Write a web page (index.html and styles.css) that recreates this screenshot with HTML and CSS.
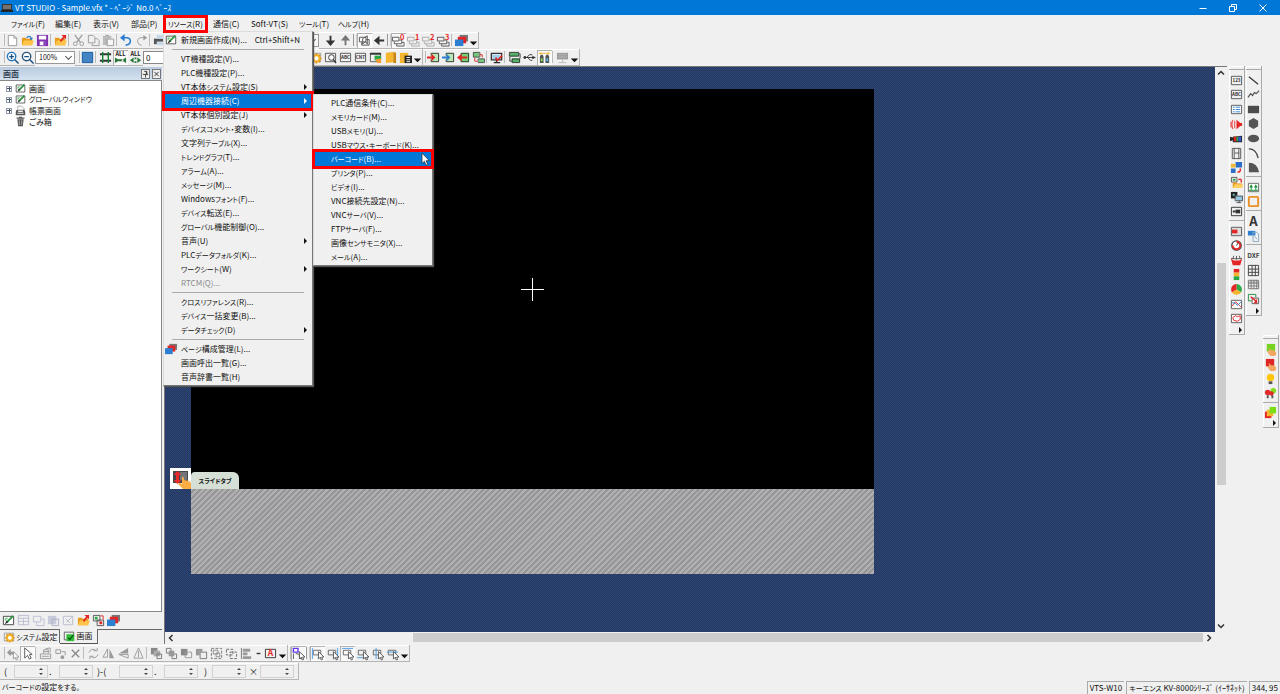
FILE: index.html
```html
<!DOCTYPE html>
<html lang="ja">
<head>
<meta charset="utf-8">
<title>VT STUDIO - Sample.vfx</title>
<link rel="stylesheet" href="styles.css">
</head>
<body>
<header class="titlebar">
  <svg class="app-icon" viewBox="0 0 12 10"><path fill="#343638" d="M1 1h10v7H1z"/><path fill="#77706c" d="M2 2h8v4H2z"/><path fill="#222" d="M0 7h12v2H0z"/></svg>
  <span class="title">VT STUDIO - Sample.vfx * - ﾍﾟｰｼﾞ No.0 ﾍﾞｰｽ</span>
  <div class="window-buttons">
    <button aria-label="最小化"><svg viewBox="0 0 10 10"><path stroke="#fff" d="M1.500 5.500h7"/></svg></button>
    <button aria-label="元に戻す"><svg viewBox="0 0 10 10"><path fill="none" stroke="#fff" d="M1.500 3.500h5v5h-5zM3.500 3V1.500h5v5H7"/></svg></button>
    <button aria-label="閉じる"><svg viewBox="0 0 10 10"><path stroke="#fff" d="M1.500 1.500l7 7M8.500 1.500l-7 7"/></svg></button>
  </div>
</header>

<nav class="menubar">
  <button><span class="kana">ファイル</span>(F)</button>
  <button>編集(E)</button>
  <button>表示(V)</button>
  <button>部品(P)</button>
  <div class="menu-root">
    <button class="marked"><span class="kana">リソース</span>(R)</button>
    <div class="menu resource-menu">
      <button class="item"><svg class="menu-icon"><use href="#i-screen"/></svg>新規画面作成(N)...<span class="shortcut">Ctrl+Shift+N</span></button>
      <hr>
      <button class="item">VT機種設定(V)...</button>
      <button class="item">PLC機種設定(P)...</button>
      <button class="item sub">VT本体<span class="kana">システム</span>設定(S)</button>
      <button class="item sub selected">周辺機器接続(C)</button>
      <button class="item sub">VT本体個別設定(J)</button>
      <button class="item"><span class="kana">デバイスコメント・</span>変数(I)...</button>
      <button class="item">文字列<span class="kana">テーブル</span>(X)...</button>
      <button class="item"><span class="kana">トレンドグラフ</span>(T)...</button>
      <button class="item"><span class="kana">アラーム</span>(A)...</button>
      <button class="item"><span class="kana">メッセージ</span>(M)...</button>
      <button class="item">Windows<span class="kana">フォント</span>(F)...</button>
      <button class="item"><span class="kana">デバイス</span>転送(E)...</button>
      <button class="item"><span class="kana">グローバル</span>機能制御(O)...</button>
      <button class="item sub">音声(U)</button>
      <button class="item">PLC<span class="kana">データフォルダ</span>(K)...</button>
      <button class="item sub"><span class="kana">ワークシート</span>(W)</button>
      <button class="item" disabled>RTCM(Q)...</button>
      <hr>
      <button class="item"><span class="kana">クロスリファレンス</span>(R)...</button>
      <button class="item"><span class="kana">デバイス</span>一括変更(B)...</button>
      <button class="item sub"><span class="kana">データチェック</span>(D)</button>
      <hr>
      <button class="item"><svg class="menu-icon"><use href="#i-pages"/></svg><span class="kana">ページ</span>構成管理(L)...</button>
      <button class="item">画面呼出一覧(G)...</button>
      <button class="item">音声辞書一覧(H)</button>
    </div>
    <div class="menu device-menu">
      <button class="item">PLC通信条件(C)...</button>
      <button class="item"><span class="kana">メモリカード</span>(M)...</button>
      <button class="item">USB<span class="kana">メモリ</span>(U)...</button>
      <button class="item">USB<span class="kana">マウス・キーボード</span>(K)...</button>
      <button class="item selected"><span class="kana">バーコード</span>(B)...</button>
      <button class="item"><span class="kana">プリンタ</span>(P)...</button>
      <button class="item"><span class="kana">ビデオ</span>(I)...</button>
      <button class="item">VNC接続先設定(N)...</button>
      <button class="item">VNC<span class="kana">サーバ</span>(V)...</button>
      <button class="item">FTP<span class="kana">サーバ</span>(F)...</button>
      <button class="item">画像<span class="kana">センサモニタ</span>(X)...</button>
      <button class="item"><span class="kana">メール</span>(A)...</button>
      <svg class="cursor" viewBox="0 0 9 14"><path fill="#fff" stroke="#222" stroke-width=".7" d="M1 1v10.500l2.400-2.200 1.700 3.900 1.700-.8-1.700-3.700h3.200z"/></svg>
    </div>
  </div>
  <button>通信(C)</button>
  <button>Soft-VT(S)</button>
  <button><span class="kana">ツール</span>(T)</button>
  <button><span class="kana">ヘルプ</span>(H)</button>
</nav>

<div class="toolbar-row">
  <div class="bar" data-icons="new open save | export | cut copy paste | undo redo | print"></div>
  <div class="page-pickers"><span class="picker"><select aria-label="ページ"><option></option></select></span></div>
  <div class="bar joined" data-icons="down up || overlap* left || over0* over1 over2 over3 | pages more"></div>
</div>
<div class="toolbar-row">
  <div class="bar open" data-icons="zoomin zoomout"></div>
  <span class="picker zoom"><select aria-label="表示倍率"><option>100%</option></select></span>
  <div class="bar open" data-icons="bluebox | fit fitall* outall"></div>
  <input class="number-box" aria-label="番号" value="0">
  <div class="bar" data-icons="gear find abc cnt touch book bookcalc more"></div>
  <div class="bar second" data-icons="inred inblue outred swap | monitor | transfer usb people* | server more"></div>
</div>

<main class="main">
  <aside class="side">
    <div class="pane-title"><b>画面</b><button aria-label="固定"><svg viewBox="0 0 8 8"><path fill="none" stroke="#333" d="M2.500 1h3v3.500M1 4.500h6M4 5v3M5 1v3"/></svg></button><button aria-label="閉じる"><svg viewBox="0 0 8 8"><path stroke="#222" d="M1.500 1.500l5 5M6.500 1.500l-5 5"/></svg></button></div>
    <ul class="tree">
      <li><i class="plus"></i><svg><use href="#i-screen"/></svg><span class="current">画面</span></li>
      <li><i class="plus"></i><svg><use href="#i-screen"/></svg><span class="kana">グローバルウィンドウ</span></li>
      <li><i class="plus"></i><svg><use href="#i-report"/></svg><span>帳票画面</span></li>
      <li><i></i><svg><use href="#i-trash"/></svg><span>ごみ箱</span></li>
    </ul>
    <div class="bar open side-tools" data-icons="screen table copyoff pasteoff editoff export swappage pages"></div>
    <div class="tabs">
      <button><svg><use href="#i-gear"/></svg><span><span class="kana">システム</span>設定</span></button>
      <button class="active"><svg><use href="#i-check"/></svg>画面</button>
    </div>
  </aside>

  <section class="workspace">
    <div class="canvas">
      <div class="screen">
        <svg class="crosshair" viewBox="0 0 24 24"><path stroke="#fff" d="M11.500 1v23M0 12.500h23"/></svg>
      </div>
      <div class="slide-area"></div>
      <div class="slide-tab">スライドタブ</div>
      <svg class="slide-handle" viewBox="0 0 21 21"><path fill="#fff" d="M0 0h21v21H0z"/><path fill="#45464a" d="M3 3h15v12H3z"/><path fill="#747579" d="M10 4h7v8h-7z"/><path fill="#e8292c" d="M7.500 3l4 4H9v5h2.500l-4 4-4-4H6V7H3.500z"/><path fill="#ffad45" d="M12 9q2-1 2 3l5 1 2 2v6h-8q-4-4-5-5 2-2 4 0z"/></svg>
    </div>
    <div class="vscroll"><button aria-label="上へ"><svg viewBox="0 0 8 8"><path d="M1 5.500l3-3 3 3"/></svg></button><div class="track"><div class="thumb"></div></div><button aria-label="下へ"><svg viewBox="0 0 8 8"><path d="M1 2.500l3 3 3-3"/></svg></button></div>
    <div class="hscroll"><button aria-label="左へ"><svg viewBox="0 0 8 8"><path d="M5.500 1l-3 3 3 3"/></svg></button><div class="track"><div class="thumb"></div></div><button aria-label="右へ"><svg viewBox="0 0 8 8"><path d="M2.500 1l3 3-3 3"/></svg></button></div>
  </section>

  <aside class="palettes">
    <div class="palette">
      <div class="group ten" data-icons="num abc list speaker video film convert folder monitor2 reader"></div>
      <div class="group seven" data-icons="redbar meter basket lights pie graph scatter"></div>
      <span class="play"></span>
    </div>
    <div class="palette">
      <div class="group six" data-icons="line zigzag rect hexagon ellipse arc sector"></div>
      <div class="group two" data-icons="image orange"></div>
      <div class="group two" data-icons="text clip"></div>
      <div class="group four" data-icons="dxf grid grid2 layers"></div>
      <span class="play"></span>
    </div>
    <div class="palette touch-palette">
      <div class="group four" data-icons="greenhand redhand bulb balls"></div>
      <div class="group one" data-icons="stack"></div>
      <span class="play"></span>
    </div>
  </aside>
</main>

<div class="toolbar-row bottom">
  <div class="bar" data-icons="pickoff pointer* | buildoff linkoff deleteoff | rotoff mirroff flipoff triangleoff | ord1 ord2 ord3 ord4 group ungroup alignoff dash redA more"></div>
  <div class="bar second" data-icons="snap* || alignl* alignr alignt* alignb alignc alignm more"></div>
</div>
<div class="toolbar-row bottom">
  <div class="coords">
    <span>(</span><label class="spin"><input aria-label="X1"></label><span>.</span><label class="spin"><input aria-label="Y1"></label>
    <span class="wide">)-(</span><label class="spin"><input aria-label="X2"></label><span>.</span><label class="spin"><input aria-label="Y2"></label>
    <span class="mid">)</span><label class="spin"><input aria-label="幅"></label><span class="mid">×</span><label class="spin"><input aria-label="高さ"></label>
  </div>
</div>

<footer class="status">
  <span class="hint"><span class="kana">バーコードの</span>設定<span class="kana">をする。</span></span>
  <span class="cell">VTS-W10</span>
  <span class="cell"><span class="kana">キーエンス</span> KV-8000ｼﾘｰｽﾞ (ｲｰｻﾈｯﾄ)</span>
  <span class="cell">344, 95</span>
</footer>
<script src="icons.js"></script>
</body>
</html>
```
FILE: styles.css
```css
* { box-sizing: border-box; }
body {
  margin: 0;
  height: 100vh;
  display: flex;
  flex-direction: column;
  overflow: hidden;
  background: #f0f0f0;
  color: #111;
  font: 8px/14px "Noto Sans CJK JP", "Noto Sans", sans-serif;
  font-feature-settings: "palt";
}
button, input, select { font: inherit; font-feature-settings: inherit; color: inherit; }
button { margin: 0; padding: 0; border: 0; background: none; white-space: nowrap; }
svg { display: block; flex: none; }
.kana { font-size: 7px; }

.titlebar { display: flex; align-items: center; height: 15px; flex: none; background: #0078d7; color: #fff; }
.app-icon { width: 12px; height: 10px; margin: 0 2px 0 1px; }
.title { flex: 1; }
.window-buttons { display: flex; gap: 20px; padding-right: 12px; }
.window-buttons svg { width: 10px; height: 10px; }

.menubar {
  display: grid;
  grid-template-columns: 44px 38px 38px 38px 44px 38px 48px 39px 40px;
  height: 17px;
  flex: none;
  padding: 1px 0 0 5px;
}
.menubar > button, .menu-root > button { padding-left: 6px; text-align: left; height: 15px; }
.menu-root { position: relative; }
.menu-root > .marked { position: relative; z-index: 6; width: 45px; height: 18px; margin-top: -1px; padding: 0 0 1px 5px; box-shadow: inset 0 0 0 3px #fe0000; }

.menu {
  position: absolute;
  z-index: 5;
  padding: 1px;
  background: #f0f0f0;
  border: 1px solid #dcdcdc;
  border-right-color: #777;
  border-bottom-color: #777;
  box-shadow: 1px 1px 1px #555;
}
.resource-menu { top: 15px; left: 0; width: 150px; }
.device-menu { top: 78px; left: 150px; width: 120px; }
.menu hr { height: 1px; margin: 2px 7px; border: 0; background: #aaa; }
.item { position: relative; display: flex; align-items: center; width: 100%; height: 14px; padding-left: 16px; text-align: left; }
.item:disabled { color: #8b8b8b; }
.menu-icon { position: absolute; left: 0; top: 1px; width: 12px; height: 12px; }
.shortcut { margin-left: auto; padding-right: 11px; }
.sub::after { content: ""; margin: 0 4px 0 auto; border: 3px solid transparent; border-left-color: currentColor; border-right-width: 0; }
.selected { z-index: 2; color: #fff; background: #0078d7; outline: 3px solid #fe0000; }
.cursor { position: absolute; z-index: 3; left: 107px; top: 57px; width: 9px; height: 14px; }

.toolbar-row { display: flex; height: 17px; flex: none; }
.toolbar-row.bottom { margin-bottom: 1px; }
.bar { display: flex; align-items: center; padding-left: 5px; border: solid #b5b5b5; border-width: 0 1px 1px 0; box-shadow: inset 0 1px #fff; }
.bar::before { content: ""; width: 1px; height: 12px; margin: 0 0 0 -1px; background: #bbb; }
.bar.open { border-right: 0; }
.bar.joined { padding-left: 4px; }
.bar.joined::before { background: none; }
.bar.second { padding-left: 3px; }
.tool { display: flex; align-items: center; justify-content: center; width: 15px; height: 15px; flex: none; }
.tool svg { width: 13px; height: 13px; overflow: visible; }
.tool.pressed { background: #f9f9f9; box-shadow: inset 1px 1px #b0b0b0, inset -1px -1px #fff; }
.tool.narrow { width: 9px; }
.sep { width: 3px; height: 12px; border-left: 1px solid #bbb; flex: none; }
.sep.double { width: 4px; border-left: 1px solid #999; border-right: 1px solid #ccc; }
.page-pickers { width: 151px; display: flex; justify-content: flex-end; align-items: center; }
.picker { position: relative; display: block; width: 90px; height: 13px; }
.picker select { appearance: none; display: block; width: 100%; height: 13px; padding: 0 3px; border: 1px solid #999; border-radius: 0; background: #f7f7f7; font-size: 7px; line-height: 11px; }
.picker::after { content: ""; position: absolute; right: 4px; top: 3px; width: 4px; height: 4px; border: solid #555; border-width: 0 1px 1px 0; rotate: 45deg; }
.picker.zoom { width: 40px; margin-top: 2px; }
.picker.zoom select { background: #fff; }
.number-box { width: 160px; height: 13px; margin: 2px 0 0; padding: 0 2px; border: 1px solid #888; background: #fff; }

.main { flex: 1; min-height: 0; display: flex; }
.side { width: 162px; flex: none; display: flex; flex-direction: column; padding-top: 1px; margin-right: 2px; }
.pane-title { display: flex; height: 13px; align-items: center; gap: 2px; padding: 0 1px 0 3px; background: linear-gradient(#b9cbdf, #d4e2f0); }
.pane-title b { flex: 1; font-weight: 500; color: #1b2b40; }
.pane-title button { width: 9px; height: 10px; border: 1px solid #777; background: #eee; }
.pane-title svg { width: 7px; height: 8px; }
.tree { flex: 1; margin: 0; padding: 2px 0 0 6px; list-style: none; background: #fff; border: 1px solid #888; border-left-width: 0; }
.tree li { display: flex; align-items: center; height: 11px; gap: 3px; }
.tree li span { line-height: 11px; padding-right: 2px; }
.tree .current { background: #f0f0f0; }
.tree svg { width: 11px; height: 11px; }
.tree i { width: 6px; height: 6px; flex: none; }
.tree i.plus { border: 1px solid #8f97a8; background: linear-gradient(#456, #456) center / 4px 1px no-repeat, linear-gradient(#456, #456) center / 1px 4px no-repeat; }
.side-tools { height: 17px; border: 0; padding-left: 1px; box-shadow: none; }
.side-tools::before { display: none; }
.tabs { display: flex; height: 16px; border-top: 1px solid #666; }
.tabs button { display: flex; align-items: center; gap: 1px; padding: 0 2px 0 3px; height: 13px; border-right: 1px solid #666; }
.tabs button svg { width: 12px; height: 12px; }
.tabs .active { height: 15px; margin-top: -1px; padding-right: 5px; background: #f0f0f0; border-bottom: 1px solid #555; }

.workspace { flex: 1; min-width: 0; display: grid; grid-template: minmax(0, 1fr) 12px / minmax(0, 1fr) 12px; border-left: 1px solid #777; border-top: 1px solid #777; margin-bottom: 1px; }
.canvas { position: relative; overflow: hidden; padding: 22px 0 0 26px; background: repeating-conic-gradient(#213661 0 25%, #314773 0 50%) 0 0 / 2px 2px; }
.screen { width: 683px; height: 400px; background: #000; display: flex; align-items: center; justify-content: center; }
.crosshair { width: 24px; height: 24px; }
.slide-area { width: 683px; height: 85px; background: repeating-linear-gradient(135deg, #b0b0b2 0 2px, #969699 2px 4px); }
.slide-tab { position: absolute; left: 26px; top: 405px; width: 48px; height: 17px; border-radius: 4px 6px 0 0; background: #d5dfd5; font-size: 6px; font-weight: 700; line-height: 17px; text-align: center; }
.slide-handle { position: absolute; left: 5px; top: 401px; width: 21px; height: 21px; }
.vscroll, .hscroll { display: flex; background: #f0f0f0; }
.vscroll { flex-direction: column; }
.vscroll button, .hscroll button { width: 12px; height: 12px; display: grid; place-items: center; }
.vscroll svg, .hscroll svg { width: 8px; height: 8px; fill: none; stroke: #333; stroke-width: 1.500; }
.track { flex: 1; }
.vscroll .track { display: grid; grid-template-rows: 34fr 41fr 25fr; padding: 0 1px 0 2px; }
.vscroll .thumb { grid-row: 2; background: #cdcdcd; }
.hscroll .thumb { width: 77%; height: 9px; margin: 1px 0 0 auto; background: #cdcdcd; }

.palettes { display: flex; align-items: flex-start; padding: 0 0 0 2px; width: 53px; flex: none; gap: 1px; }
.palette { width: 16px; display: flex; flex-direction: column; align-items: center; padding-top: 3px; border: solid #aaa; border-width: 0 1px 1px 0; box-shadow: inset 1px 1px #fff; }
.touch-palette { margin-top: 269px; }
.group { display: grid; grid-auto-rows: 1fr; border-top: 1px solid #aaa; padding: 3px 0 1px; }
.group .tool { height: auto; }
.group.ten { height: 151px; }
.group.seven { height: 107px; }
.group.six { height: 107px; }
.group.four { height: 64px; }
.group.two { height: 34px; }
.group.one { height: 18px; }
.play { margin: 0 -8px 1px 0; border: 3px solid transparent; border-left-color: #111; border-right: 0; }

.coords { display: flex; align-items: center; padding: 0 4px 0 3px; border: solid #b5b5b5; border-width: 0 1px 1px 0; box-shadow: inset 0 1px #fff; font-size: 9px; line-height: 13px; }
.coords span { width: 11px; padding-left: 1px; text-align: left; }
.coords .wide { width: 26px; padding-left: 4px; }
.coords .mid { width: 14px; text-align: center; }
.spin { position: relative; display: block; width: 34px; height: 13px; border: 1px solid #d2d2d2; }
.spin input { display: block; width: 23px; height: 11px; padding: 0; border: 0; background: none; }
.spin::before, .spin::after { content: ""; position: absolute; right: 4px; border: 2px solid transparent; }
.spin::before { top: 2px; border-bottom-color: #444; border-top-width: 0; }
.spin::after { bottom: 2px; border-top-color: #444; border-bottom-width: 0; }

.status { display: flex; gap: 2px; height: 13px; flex: none; line-height: 12px; }
.hint { flex: 1; padding-left: 2px; }
.cell { padding: 0 2px; border: solid #aaa; border-width: 1px 0 0 1px; white-space: nowrap; }
```
FILE: icons.js
```js
const P = (d, fill) => `<path d="${d}" fill="${fill}"/>`;
const S = (d, stroke, w = 1) => `<path d="${d}" fill="none" stroke="${stroke}" stroke-width="${w}"/>`;
const G = '#555', L = '#999', R = '#e32525', B = '#2c7fd0', Y = '#f5b52e', N = '#28a745';
const label = (t, size = 5, color = '#333', x = 7, y = 9) =>
  `<text x="${x}" y="${y}" font-size="${size}" font-weight="700" text-anchor="middle" fill="${color}">${t}</text>`;
const folder = P('M1 4h4l1 1h6v7H1z', '#e89a1c') + P('M3 7h11l-2 5H1z', '#ffc54a');
const frame = (c = G) => S('M1.500 2.500h11v9h-11z', c);
const cursor = c => P('M8 5v8l2-2 1 3 1.500-.6-1-2.600H14z', '#fff') + S('M8 5v8l2-2 1 3 1.500-.6-1-2.600H14z', c);
const sheets = c => S('M.5 3.500h7v4h-7zM2.500 8v2.500h8v-4H8M5 11v2h8V9h-2', c);
const hand = P('M5 6q1.500-1 2 1.500l4 .5 2 2v3l-2 1H7L3 9q1-1 3 1z', '#f3a662');
const box = (x, y, w, c) => P(`M${x} ${y}h${w}v${w}h-${w}z`, c);

const icons = {
  new: P('M3 1h5l3 3v9H3z', '#fff') + S('M2.500 1.500h6l3 3v8h-9zM8.500 1.500v3h3', L),
  open: folder + S('M6 4q3-3 5 0', B, 1.5) + P('M9 4h4l-2 3z', B),
  save: P('M1 1h12v12H1z', '#8030b0') + P('M3 2h8v4H3zM4 8h6v4H4z', '#fff') + P('M8 8h2v4H8z', '#8030b0'),
  export: folder + S('M7 8l4-5', R, 2) + P('M8 1h5v5z', R),
  cut: S('M3 1l6 8M11 1L5 9', L, 1.3) + `<g fill="none" stroke="${L}"><circle cx="3.500" cy="10.500" r="2"/><circle cx="10.500" cy="10.500" r="2"/></g>`,
  copy: S('M1.500 1.500h5l2 2v6h-7zM9 5h2l2 2v5.500H5.500V10', L),
  paste: P('M1 2h9v10H1z', '#bbb') + P('M6 5h7v8H6z', '#f7f7f7') + S('M5.500 5.500h7v7h-7zM3.500 1.500h4', L),
  undo: S('M3 4h5q4 1 3 5-1 3-5 3', B, 1.7) + P('M5 0v8L0 4z', B),
  redo: S('M11 4H6Q2 5 3 9q1 3 4 3', L) + P('M9 1v6l4-3z', L),
  print: P('M1 5h12v6H1z', G) + P('M4 1h7v4H4zM4 8h7v4H4z', '#c8d8e8'),
  down: P('M6 2h2v5h4l-5 6-5-6h4z', '#333'), up: P('M6 12h2V7h4L7 1 2 7h4z', '#777'),
  left: P('M12 6v2H7v4L1 7l6-5v4z', '#333'),
  overlap: S('M1.500 3.500h7v5h-7zM4 9v3h8V6H9', G) + S('M5 5l5-3v9l-2-3-3 3z', G),
  pages: P('M5 1h9v7H5z', '#777') + P('M3 3h9v7H3z', R) + P('M0 6h9v7H0z', B),
  more: P('M3 8h8l-4 4z', '#111'),
  zoomin: `<circle cx="6" cy="6" r="4.500" fill="#fff" stroke="#2678bd" stroke-width="1.500"/>` + S('M3.500 6h5M6 3.500v5M9.500 9.500l4 4', '#164f86', 1.5),
  zoomout: `<circle cx="6" cy="6" r="4.500" fill="#fff" stroke="#2b5577" stroke-width="1.500"/>` + S('M3.500 6h5M9.500 9.500l4 4', '#164f86', 1.5),
  bluebox: box(1, 1, 12, '#4284c4') + S('M1.500 1.500h11v11h-11z', '#2364a5'),
  fit: S('M1 3.500h12M1 10.500h12', '#333', 2) + S('M4 1v12M10 1v12', '#138334', 1.5),
  fitall: label('ALL', 6, '#222', 7, 5) + P('M1 7l5 3-5 3zM13 7l-5 3 5 3zM4 9h6v2H4z', '#28763a'),
  outall: label('ALL', 6, '#222', 7, 5) + P('M5 7L1 10l4 3zM9 7l4 3-4 3zM6 7h2v2H6zM6 11h2v2H6z', '#28763a'),
  gear: frame(L) + `<circle cx="8" cy="8" r="3.500" fill="#fff" stroke="${Y}" stroke-width="2.500"/>` + S('M8 2.500v2M8 11.500v2M2.500 8h2M11.500 8h2M4 4l1.500 1.500M10.500 10.500L12 12M12 4l-1.500 1.500M5.500 10.500L4 12', '#dc9412', 1.5),
  find: frame() + `<circle cx="8" cy="7" r="3" fill="#fff" stroke="#333"/>` + S('M10 9l3 4', '#333', 1.5),
  abc: frame() + label('ABC'), cnt: frame() + label('CNT'), num: frame() + label('123'),
  touch: frame() + P('M6 5h7v5H6z', N) + P('M7 9l6-1v5H9z', '#ff9a35') + S('M1 3h12', '#333', 2),
  book: P('M2 2l8-1v11l-8 1z', Y) + P('M10 1l3 1v11h-3z', '#c98512'),
  bookcalc: P('M1 2h9v11H1z', Y) + P('M6 5h8v8H6z', '#222') + S('M8 7h4M8 9.500h4M8 11.500h4', '#fff'),
  inred: P('M4 2h9v10H4z', '#bce5b5') + S('M4.500 5V2.500h8v9h-8V9', '#333') + P('M0 6h5V3l4 4-4 4V8H0z', R),
  inblue: P('M4 2h9v10H4z', '#bce5b5') + S('M4.500 5V2.500h8v9h-8V9', '#333') + P('M0 6h5V3l4 4-4 4V8H0z', B),
  outred: P('M4 2h9v10H4z', '#75d375') + S('M4.500 5V2.500h8v9h-8V9', '#333') + P('M11 6H5V3L0 7l5 4V8h6z', R),
  swap: P('M1 1h7v6H1zM7 8h6v5H7z', '#77c77f') + S('M1.500 1.500h7v5h-7zM6.500 8.500h7v4h-7z', G) + S('M11 7V4H8M3 7v4h3', R),
  monitor: P('M3 4h8v5H3z', '#9dd1f0') + S('M1.500 2.500h11v7h-11zM4 12.500h7M7 10v2', '#333', 1.5) + S('M6 7l2 3 5-5', R, 1.7),
  transfer: P('M2 2h9v4H2zM4 8h9v4H4z', '#52b566') + S('M1.500 1.500h10v4h-10zM4.500 8.500h8v4h-8zM12 3h1v5M2 6v5h2', '#333'),
  usb: S('M1 7h11M4 7l3-3h3M5 7l3 3h2', '#333') + `<circle cx="2" cy="7" r="1.500" fill="#333"/>` + P('M10 5l4 2-4 2z', '#333'),
  people: P('M2 6l1-2h2l1 2v7H2zM8 6l1-2h2l1 2v7H8z', G) + P('M3 8h2v3H3z', '#80dd55') + P('M9 8h2v3H9z', '#5bb7ef') + S('M1 2.500h12M3 1v3M11 1v3', Y),
  server: P('M1 2h12v7H1z', L) + S('M7 9v3M3 12.500h8M2 4h10M2 6.500h10', '#bbb'),
  screen: P('M1 2h12v10H1z', '#fff') + S('M1.500 2.500h11v9h-11z', '#444') + P('M3 4h4l-4 4z', '#7fc98a') + S('M5 9l7-7', '#26923b', 2) + P('M5 7l2 2-4 2z', '#333'),
  report: S('M3.500 5V1.500h5l3 3V8', L) + P('M2 6h10l1 3v4H1V9z', G) + P('M4 7h6v2H4zM3 10h8v1H3z', '#eee'),
  trash: P('M3 4h8l-1 9H4zM2 2h10v1.500H2zM5 1h4v1H5z', G) + S('M5.500 5.500v6M8.500 5.500v6', '#bbb'),
  table: S('M1.500 1.500h11v10h-11zM1 4.500h12M7 5v7M1 8h12', '#b9bdd0'),
  copyoff: S('M1.500 2.500h8v6h-8zM5 9v3.500h8v-7h-3', '#b9bdd0'),
  pasteoff: P('M1 2h9v9H1z', '#c7cad8') + S('M5.500 5.500h7v7h-7z', '#a9afc8'),
  editoff: S('M1.500 2.500h10v9h-10zM5 9l7-7M4 5l5 5', '#b9bdd0'),
  swappage: S('M1.500 1.500h7v6h-7zM5.500 6.500h7v6h-7z', G) + P('M3 3h3v3H3z', N) + P('M8 8h3v3H8z', R) + S('M9 2h3v4', R),
  check: frame() + P('M4 5h9v8H4z', '#30bd35') + S('M6 9l2 2 4-5', '#075f19', 1.7),
  list: P('M1 2h12v10H1z', '#fff') + frame() + S('M3 4.500h2M3 7h2M3 9.500h2M6 4.500h5M6 7h5M6 9.500h5', B),
  speaker: P('M13 5.500h-2L7 2v10l4-3.500h2z', R) + S('M5 3v8M3 2Q1 7 3 12M1 4v6', '#ef6060', 1.3),
  video: P('M0 5l3 1V5l10-1v7H3V9l-3 1z', '#252525') + P('M4 5h3v5H4z', R) + P('M7 5h2v5H7z', N) + P('M9 5h3v5H9z', '#315bd4'),
  film: S('M2.500 1.500h9v11h-9zM4.500 1v12M9.500 1v12M5 6.500h5', G),
  convert: P('M6 1h7v6H6zM1 8h5v5H1z', '#2a70c8') + P('M1 3h5v4H1z', '#f0b735') + S('M8 12q4 0 3-4', R, 1.5),
  folder: S('M1.500 1.500h6v5h-6z', G) + P('M3 3h3v2H3z', N) + P('M3 7h4l1 1h5v5H3z', '#e89a1c') + P('M5 9h9l-1 4H3z', '#ffd060') + S('M9 4q4-2 3 3', R, 1.5),
  monitor2: P('M1 1h7v7H1z', '#222') + P('M3 3h2v2H3z', '#6dccc4') + P('M6 5h8v6H6z', '#94c8e4') + S('M5.500 5.500h8v5h-8zM10 10v3M7 12.500h5', G),
  reader: frame('#333') + P('M6 5h5v4H6z', '#333') + S('M3 7h3', '#333', 2),
  redbar: P('M1 3h12v8H1z', '#ddd') + frame() + P('M2 5h6v4H2z', R),
  meter: `<circle cx="7" cy="7" r="5" fill="#fff" stroke="#444" stroke-width="1.500"/>` + S('M7 3a4 4 0 1 1-4 4', R, 2) + S('M7 7l2-3', '#333'),
  basket: P('M1 5l3 2h6l3-2-2 7H3z', R) + S('M3 5l1-3M7 6V2M11 5l-1-3M1 5h12', G),
  lights: P('M4 1h6v4H4z', R) + P('M4 5h6v4H4z', Y) + P('M4 9h6v4H4z', N),
  pie: P('M7 7V1a6 6 0 0 1 5 9z', '#2eaa48') + P('M7 7l5 3a6 6 0 0 1-10 0z', Y) + P('M7 7L2 10A6 6 0 0 1 7 1z', R),
  graph: P('M1 2h12v10H1z', '#fff') + frame(G) + S('M2 9l4-5 6 6', R) + S('M2 5q5 0 6 3l4-4', B),
  scatter: P('M1 2h12v10H1z', '#fff') + frame() + S('M3 6l3-2 2 1 3-1v4l-3 2-4-1z', R),
  line: S('M2 3l10 8', '#333', 1.3), zigzag: S('M1 10l3-4 2 2 2-3 2 1 3-3', G, 1.3), rect: P('M1 3h12v8H1z', '#4c4c4c'),
  hexagon: P('M7 1l5 3v6l-5 3-5-3V4z', '#555'), ellipse: `<ellipse cx="7" cy="7" rx="6" ry="4" fill="#555"/>`,
  arc: S('M2 2q8 0 10 10', '#444', 1.3), sector: P('M2 2q9 0 11 10H2z', '#555'),
  image: P('M1 2h12v10H1z', '#fff') + frame('#666') + P('M4.500 3.500l2 3.500H5v3H4V7H2.500zM9.500 3.500l2 3.500H10v3H9V7H7.500z', '#168c35') + S('M2 10h10', '#168c35'),
  orange: `<rect x="2" y="2" width="10" height="10" rx="1" fill="none" stroke="#e99126" stroke-width="2"/>`,
  text: label('A', 14, '#333', 7, 12), clip: P('M1 2h8v5H1z', B) + S('M6.500 3.500h4l2 2v8h-6zM8 8l3 3', '#8aa9c8'),
  dxf: label('DXF', 7, '#444', 7, 10), grid: S('M1.500 1.500h11v11h-11zM5.500 1v12M9 1v12M1 5.500h12M1 9h12', '#444'),
  grid2: P('M2 3h10v3H2z', '#ccc') + S('M1.500 2.500h11v9h-11zM4.500 2v10M7.500 2v10M10.500 2v10M1 5.500h12M1 8.500h12', '#777'),
  layers: S('M1.500 1.500h8v7h-8z', '#258c3e') + P('M5 5h8v7H5z', '#fff') + S('M5.500 5.500h7v6h-7z', G) + S('M4 4l6 5', R, 1.5) + P('M11 6v5H7z', R),
  greenhand: P('M3 1h9v8H3z', '#77d321') + hand, redhand: P('M2 1h9v8H2z', '#df2525') + hand,
  bulb: `<circle cx="7" cy="6" r="4" fill="#ffc60b"/>` + P('M5 10h4v3H5z', '#555'),
  balls: `<circle cx="10" cy="4" r="3" fill="#84dc19"/><circle cx="4" cy="6" r="3" fill="#e2292b"/><circle cx="8" cy="7" r="2.500" fill="#e2292b"/>` + P('M3 9h2v3H3zM8 9h2v3H8z', G),
  stack: box(1, 6, 7, R) + box(3, 4, 7, Y) + box(6, 1, 7, '#7cdd15'),
  pickoff: P('M1 6l4-4v3h4v3H5v2z', L) + cursor(L), pointer: P('M4 1v11l3-3 2 4 2-1-2-4h3z', '#fff') + S('M4 1v11l3-3 2 4 2-1-2-4h3z', '#555'),
  buildoff: S('M1.500 7.500h11v5h-11zM5 7V3h5v4M5 5h5M3 10h8M7 2l5-1v5', L), linkoff: S('M2 3h5v4H2zM8 5h4v4', L) + `<circle cx="9" cy="11" r="2" fill="${L}"/>`,
  deleteoff: S('M3 3l8 8M11 3l-8 8', '#888', 1.4), rotoff: S('M2 6q3-6 8-2M12 8q-3 6-8 2M7 4h4V1M7 10H3v3', L),
  mirroff: P('M8 2v10h5z', L) + S('M6 2v9H1z', L), flipoff: P('M12 1v6H2z', L) + S('M12 8v4L2 8z', L), triangleoff: S('M7 1L2 12h10zM7 4v7', L),
  ord1: P('M1 1h7v7H1z', '#888') + P('M4 4h7v6H4z', '#aaa') + S('M7.500 7.500h5v5h-5z', '#777'),
  ord2: S('M1.500 1.500h5v5h-5zM7.500 7.500h5v5h-5z', '#777') + P('M4 4h6v6H4z', '#999'),
  ord3: P('M1 2h7v7H1z', '#888') + S('M5.500 5.500h7v6h-7z', L), ord4: P('M1 2h7v7H1z', '#999') + P('M5 5h8v8H5z', '#eee') + S('M5.500 5.500h7v7h-7z', '#777'),
  group: `<path d="M1.500 1.500h11v11h-11z" fill="none" stroke="#777" stroke-dasharray="3 1.500"/>` + S('M3.500 3.500h5v4h-5zM6.500 6.500h4v4h-4z', '#888'),
  ungroup: `<path d="M1.500 2.500h7v6h-7zM5.500 5.500h7v7h-7z" fill="none" stroke="#666" stroke-dasharray="3 1.500"/>`,
  alignoff: S('M1.500 1v12', '#777') + P('M3 2h8v3H3zM3 6h5v3H3zM3 10h9v3H3z', L), dash: S('M5 7h4', '#333', 1.500),
  redA: frame('#333') + label('A', 9, R, 7, 10),
  snap: S('M1.500 1.500h5v4h-5z', '#6737f0', 1.5) + S('M1.500 7v6M4 7l4 1v4l5 1', G) + cursor(G)
};
const number = n => sheets(n === 1 || n === 2 ? '#aaa' : '#555') + label(n, 8, R, 11, 6);
[0, 1, 2, 3].forEach(n => { icons['over' + n] = number(n); });
const guides = { alignl: 'M1.500 1v12', alignr: 'M12.500 1v12', alignt: 'M1 1.500h12', alignb: 'M1 11.500h12', alignc: 'M5.500 1v12', alignm: 'M1 5.500h12' };
Object.entries(guides).forEach(([name, d]) => { icons[name] = S('M2.500 3.500h8v5h-8z', '#666') + S(d, '#4a9de8') + cursor('#555'); });

const sprite = document.createElement('div');
sprite.hidden = true;
sprite.innerHTML = '<svg>' + Object.entries(icons).map(([name, art]) => `<symbol id="i-${name}" viewBox="0 0 14 14">${art}</symbol>`).join('') + '</svg>';
document.body.prepend(sprite);

document.querySelectorAll('[data-icons]').forEach(bar => {
  bar.innerHTML = bar.dataset.icons.split(' ').map(token => {
    if (token === '|') return '<span class="sep"></span>';
    if (token === '||') return '<span class="sep double"></span>';
    const name = token.replace('*', '');
    const state = (token.endsWith('*') ? ' pressed' : '') + (name === 'more' || name === 'dash' ? ' narrow' : '');
    return `<button class="tool${state}" aria-label="${name}"><svg viewBox="0 0 14 14">${icons[name]}</svg></button>`;
  }).join('');
});
```
